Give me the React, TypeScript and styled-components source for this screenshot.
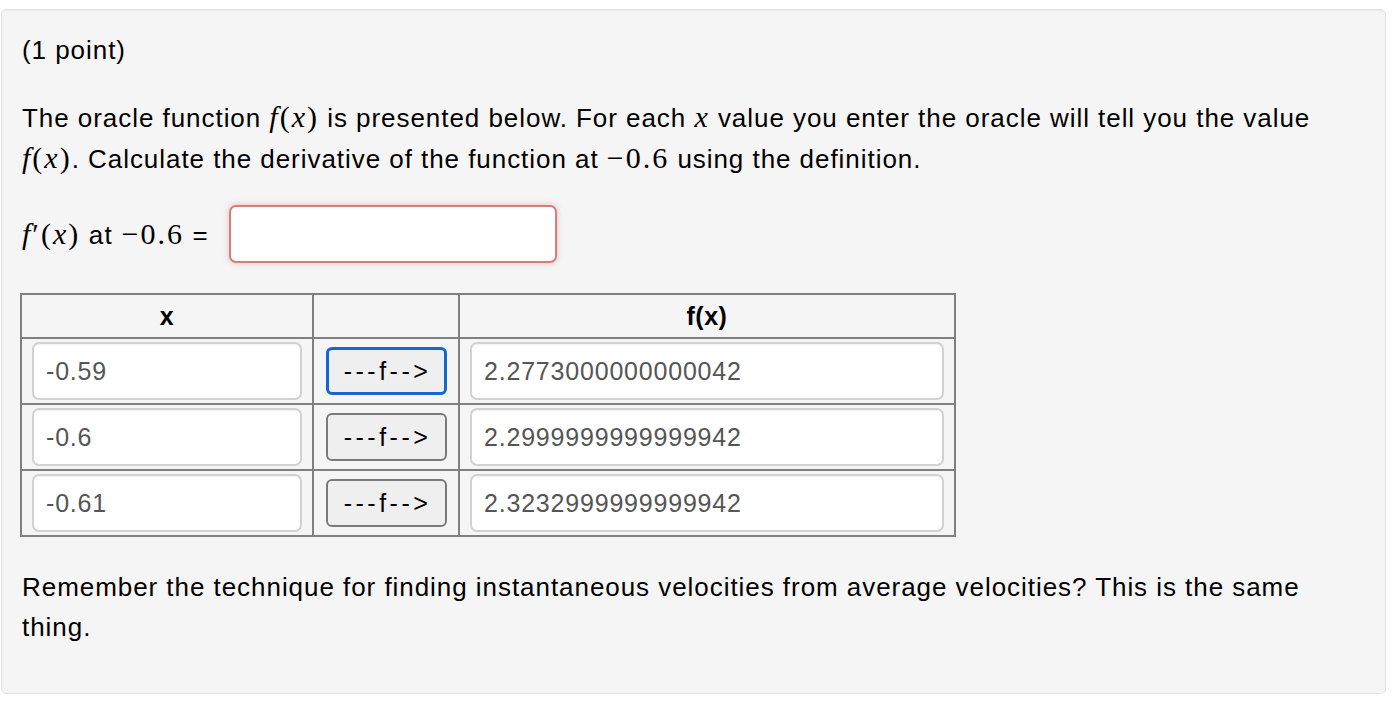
import styled, { createGlobalStyle } from 'styled-components';

const GlobalStyle = createGlobalStyle`
  body {
    margin: 0;
    background: #ffffff;
    font-family: "Liberation Sans", Arial, Helvetica, sans-serif;
    color: #000;
  }
`;

const Page = styled.div`
  padding: 9px 10px 0 1px;
`;

const Panel = styled.div`
  background: #f5f5f5;
  border: 1px solid #e3e3e3;
  border-radius: 5px;
  box-shadow: inset 0 1px 1px rgba(0, 0, 0, 0.05);
  padding: 20px 20px 46px 20px;
  font-size: 26px;
  letter-spacing: 0.95px;
  line-height: 40px;
`;

const Para = styled.p<{ $gap?: number }>`
  margin: ${(p) => p.$gap ?? 0}px 0 0 0;
`;

const M = styled.span<{ $italic?: boolean }>`
  font-family: "Liberation Serif", "Times New Roman", serif;
  font-style: ${(p) => (p.$italic ? 'italic' : 'normal')};
  font-size: 30px;
  letter-spacing: 2px;
`;

const AnswerRow = styled.div`
  display: flex;
  align-items: center;
  gap: 20px;
  margin-top: 26px;
  height: 58px;
`;

const Label = styled.span`
  letter-spacing: 1.3px;
`;

const AnswerInput = styled.input`
  width: 328px;
  height: 58px;
  box-sizing: border-box;
  background: #fff;
  border: 2px solid #d47d7d;
  border-radius: 7px;
  box-shadow: 0 0 6px rgba(210, 90, 90, 0.35);
  outline: none;
  font: inherit;
  padding: 0 12px;
`;

const Table = styled.table`
  margin: 30px 0 0 -2px;
  border-collapse: collapse;
  table-layout: fixed;
  width: 934px;
  border: 2px solid #808080;
  letter-spacing: normal;
`;

const HeadCell = styled.th`
  border: 2px solid #808080;
  height: 42px;
  padding: 0;
  font-weight: bold;
  font-size: 25px;
  letter-spacing: 0.5px;
  text-align: center;
`;

const Cell = styled.td<{ $pad: number }>`
  border: 2px solid #808080;
  padding: 3px ${(p) => p.$pad}px;
  height: 58px;
  text-align: center;
`;

const ValueInput = styled.input`
  display: block;
  width: 100%;
  height: 58px;
  box-sizing: border-box;
  background: #fff;
  border: 2px solid #d2d2d2;
  border-radius: 7px;
  box-shadow: inset 0 1px 1px rgba(0, 0, 0, 0.06);
  outline: none;
  font-family: "Liberation Sans", Arial, sans-serif;
  font-size: 25px;
  letter-spacing: 0.8px;
  color: #555;
  padding: 0 12px;
`;

const FButton = styled.button<{ $focused?: boolean }>`
  display: block;
  margin: 0 auto;
  width: 121px;
  height: 48px;
  box-sizing: border-box;
  background: #efefef;
  border: ${(p) => (p.$focused ? '3px solid #1565d2' : '2px solid #7a7a7a')};
  border-radius: 6px;
  font-family: "Liberation Sans", Arial, sans-serif;
  font-size: 25px;
  letter-spacing: 3.5px;
  color: #000;
  padding: 0 0 0 3px;
`;

const rows = [
  { x: '-0.59', fx: '2.2773000000000042', focused: true },
  { x: '-0.6', fx: '2.2999999999999942' },
  { x: '-0.61', fx: '2.3232999999999942' },
];

export default function App() {
  return (
    <Page>
      <GlobalStyle />
      <Panel>
        <Para>(1 point)</Para>
        <Para $gap={27}>
          The oracle function <M $italic>f</M>
          <M>(</M>
          <M $italic>x</M>
          <M>)</M> is presented below. For each <M $italic>x</M> value you enter the oracle will tell you the value{' '}
          <M $italic>f</M>
          <M>(</M>
          <M $italic>x</M>
          <M>)</M>. Calculate the derivative of the function at <M>−0.6</M> using the definition.
        </Para>
        <AnswerRow>
          <Label>
            <M $italic>f</M>
            <M>′(</M>
            <M $italic>x</M>
            <M>)</M> at <M>−0.6</M> =
          </Label>
          <AnswerInput type="text" />
        </AnswerRow>
        <Table>
          <colgroup>
            <col style={{ width: 292 }} />
            <col style={{ width: 146 }} />
            <col style={{ width: 496 }} />
          </colgroup>
          <thead>
            <tr>
              <HeadCell>x</HeadCell>
              <HeadCell />
              <HeadCell>f(x)</HeadCell>
            </tr>
          </thead>
          <tbody>
            {rows.map((r) => (
              <tr key={r.x}>
                <Cell $pad={10}>
                  <ValueInput defaultValue={r.x} />
                </Cell>
                <Cell $pad={10}>
                  <FButton $focused={r.focused}>---f--&gt;</FButton>
                </Cell>
                <Cell $pad={10}>
                  <ValueInput defaultValue={r.fx} />
                </Cell>
              </tr>
            ))}
          </tbody>
        </Table>
        <Para $gap={30}>
          Remember the technique for finding instantaneous velocities from average velocities? This is the same thing.
        </Para>
      </Panel>
    </Page>
  );
}
